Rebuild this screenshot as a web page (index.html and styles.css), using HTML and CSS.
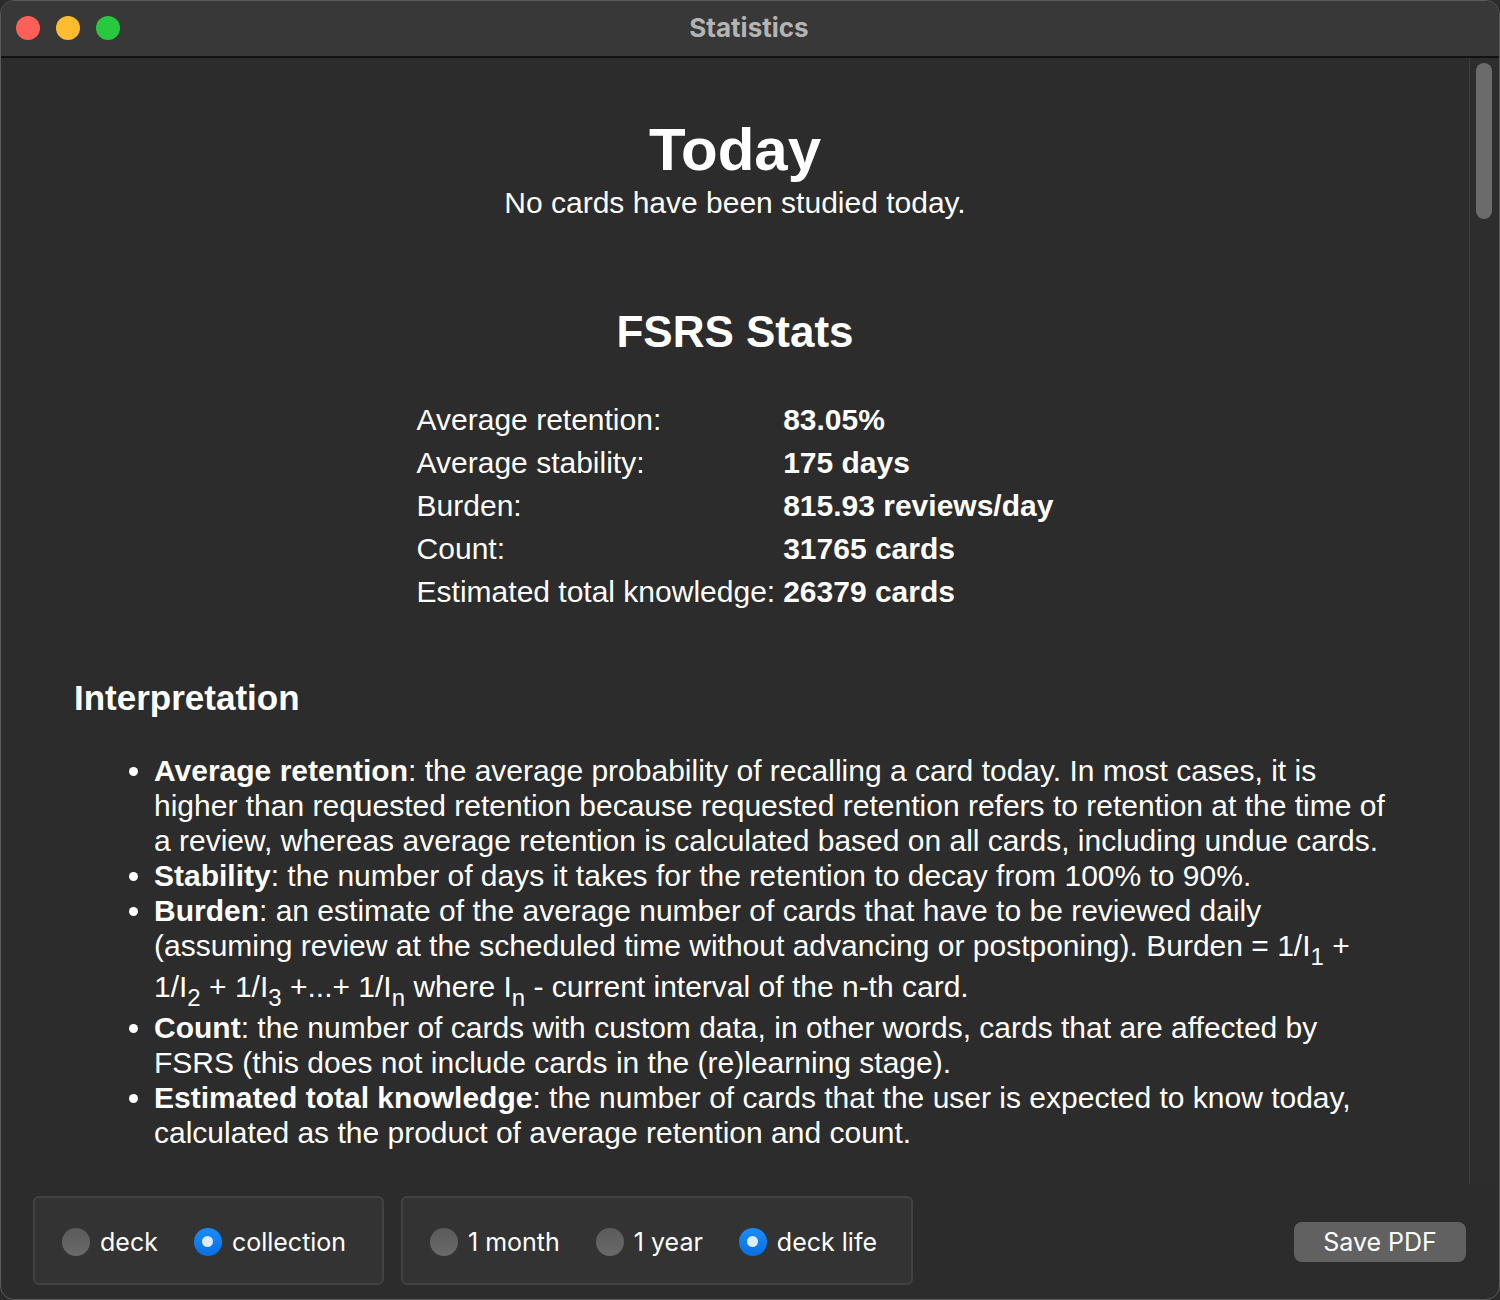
FILE: index.html
```html
<!DOCTYPE html>
<html>
<head>
<meta charset="utf-8">
<title>Statistics</title>
<link rel="stylesheet" href="styles.css">
</head>
<body>
<div class="window">
  <div class="titlebar">
    <div class="lights">
      <span class="light red"></span>
      <span class="light yellow"></span>
      <span class="light green"></span>
    </div>
    <div class="title">Statistics</div>
  </div>
  <div class="main">
    <div class="content">
      <h1 class="today">Today</h1>
      <p class="subtitle">No cards have been studied today.</p>
      <h2 class="fsrs">FSRS Stats</h2>
      <div class="stats">
        <div class="label">Average retention:</div><div class="value">83.05%</div>
        <div class="label">Average stability:</div><div class="value">175 days</div>
        <div class="label">Burden:</div><div class="value">815.93 reviews/day</div>
        <div class="label">Count:</div><div class="value">31765 cards</div>
        <div class="label">Estimated total knowledge:</div><div class="value">26379 cards</div>
      </div>
      <h3 class="interp">Interpretation</h3>
      <ul class="notes">
        <li><b>Average retention</b>: the average probability of recalling a card today. In most cases, it is higher than requested retention because requested retention refers to retention at the time of a review, whereas average retention is calculated based on all cards, including undue cards.</li>
        <li><b>Stability</b>: the number of days it takes for the retention to decay from 100% to 90%.</li>
        <li><b>Burden</b>: an estimate of the average number of cards that have to be reviewed daily (assuming review at the scheduled time without advancing or postponing). Burden = 1/I<sub>1</sub> + 1/I<sub>2</sub> + 1/I<sub>3</sub> +...+ 1/I<sub>n</sub> where I<sub>n</sub> - current interval of the n-th card.</li>
        <li><b>Count</b>: the number of cards with custom data, in other words, cards that are affected by FSRS (this does not include cards in the (re)learning stage).</li>
        <li><b>Estimated total knowledge</b>: the number of cards that the user is expected to know today, calculated as the product of average retention and count.</li>
      </ul>
    </div>
    <div class="scrollbar"><div class="thumb"></div></div>
  </div>
  <div class="bottombar">
    <div class="group group-scope">
      <label class="radio"><span class="dot"></span>deck</label>
      <label class="radio checked"><span class="dot"></span>collection</label>
    </div>
    <div class="group group-range">
      <label class="radio"><span class="dot"></span>1 month</label>
      <label class="radio"><span class="dot"></span>1 year</label>
      <label class="radio checked"><span class="dot"></span>deck life</label>
    </div>
    <div class="spacer"></div>
    <button class="save">Save PDF</button>
  </div>
</div>
</body>
</html>
```

FILE: styles.css
```css
* { box-sizing: border-box; }
html, body {
  margin: 0;
  padding: 0;
  background: #2b2b2b;
}
.window {
  width: 1500px;
  height: 1300px;
  display: flex;
  flex-direction: column;
  background: #2c2c2c;
  border: 1px solid #5a5a5a;
  border-radius: 14px;
  overflow: hidden;
}
.titlebar {
  height: 57px;
  flex: 0 0 57px;
  background: #383838;
  border-bottom: 2px solid #121212;
  display: flex;
  align-items: center;
  justify-content: center;
  position: relative;
}
.lights {
  position: absolute;
  left: 15px;
  top: 15px;
  display: flex;
  gap: 16px;
}
.light {
  width: 24px;
  height: 24px;
  border-radius: 50%;
  display: block;
}
.red { background: #fe5f57; }
.yellow { background: #febc2e; }
.green { background: #28c840; }
.title {
  font-family: Inter, "Noto Sans", sans-serif;
  font-weight: 700;
  font-size: 26px;
  color: #b4b4b4;
  margin-top: -3px;
  margin-left: -2px;
}
.main {
  flex: 0 0 1126px;
  display: flex;
  min-height: 0;
}
.content {
  flex: 1;
  padding: 57px 73px 0 73px;
  font-family: "Liberation Sans", Arial, sans-serif;
  color: #ffffff;
  font-size: 30px;
  overflow: hidden;
}
.today {
  margin: 0;
  text-align: center;
  font-size: 60px;
  line-height: 70px;
  font-weight: 700;
}
.subtitle {
  margin: 0;
  text-align: center;
  font-size: 30px;
  line-height: 36px;
}
.fsrs {
  margin: 85px 0 0;
  text-align: center;
  font-size: 44px;
  line-height: 52px;
  font-weight: 700;
}
.stats {
  margin: 40px auto 0;
  display: grid;
  grid-template-columns: max-content max-content;
  column-gap: 8px;
  width: max-content;
  line-height: 43px;
}
.value { font-weight: 700; }
.interp {
  margin: 64px 0 0;
  font-size: 35px;
  line-height: 42px;
  font-weight: 700;
}
.notes {
  margin: 34px 0 0;
  padding-left: 80px;
  padding-right: 4px;
  line-height: 35px;
}
.notes sub {
  font-size: 24px;
  line-height: 24px;
  vertical-align: -9px;
}
.scrollbar {
  flex: 0 0 30px;
  background: #2d2d2d;
  border-left: 1px solid #3b3b3b;
  padding: 5px 0 0 6px;
}
.thumb {
  width: 16px;
  height: 156px;
  border-radius: 8px;
  background: #6b6b6b;
}
.bottombar {
  flex: 1;
  display: flex;
  align-items: center;
  padding: 0 33px 2px 32px;
  gap: 17px;
  font-family: Inter, "Noto Sans", sans-serif;
  font-size: 25px;
  color: #ffffff;
}
.group {
  height: 89px;
  background: #333333;
  border: 2px solid #424242;
  border-radius: 6px;
  display: flex;
  align-items: center;
}
.group-scope {
  width: 351px;
  padding-left: 27px;
  gap: 36px;
}
.group-range {
  width: 512px;
  padding-left: 27px;
  gap: 36px;
}
.radio {
  display: flex;
  align-items: center;
  gap: 10px;
  margin-top: 2px;
}
.dot {
  width: 28px;
  height: 28px;
  border-radius: 50%;
  background: linear-gradient(#5b5b5b, #6a6a6a);
  display: flex;
  align-items: center;
  justify-content: center;
}
.checked .dot {
  background: linear-gradient(#1a8cff, #0a6fe0);
}
.checked .dot::after {
  content: "";
  width: 11px;
  height: 11px;
  border-radius: 50%;
  background: #dcebff;
}
.spacer { flex: 1; }
.save {
  width: 172px;
  height: 40px;
  border: none;
  border-radius: 8px;
  background: #616161;
  color: #ffffff;
  font-family: Inter, "Noto Sans", sans-serif;
  font-size: 25px;
  margin-top: 2px;
  padding: 0;
}
```
